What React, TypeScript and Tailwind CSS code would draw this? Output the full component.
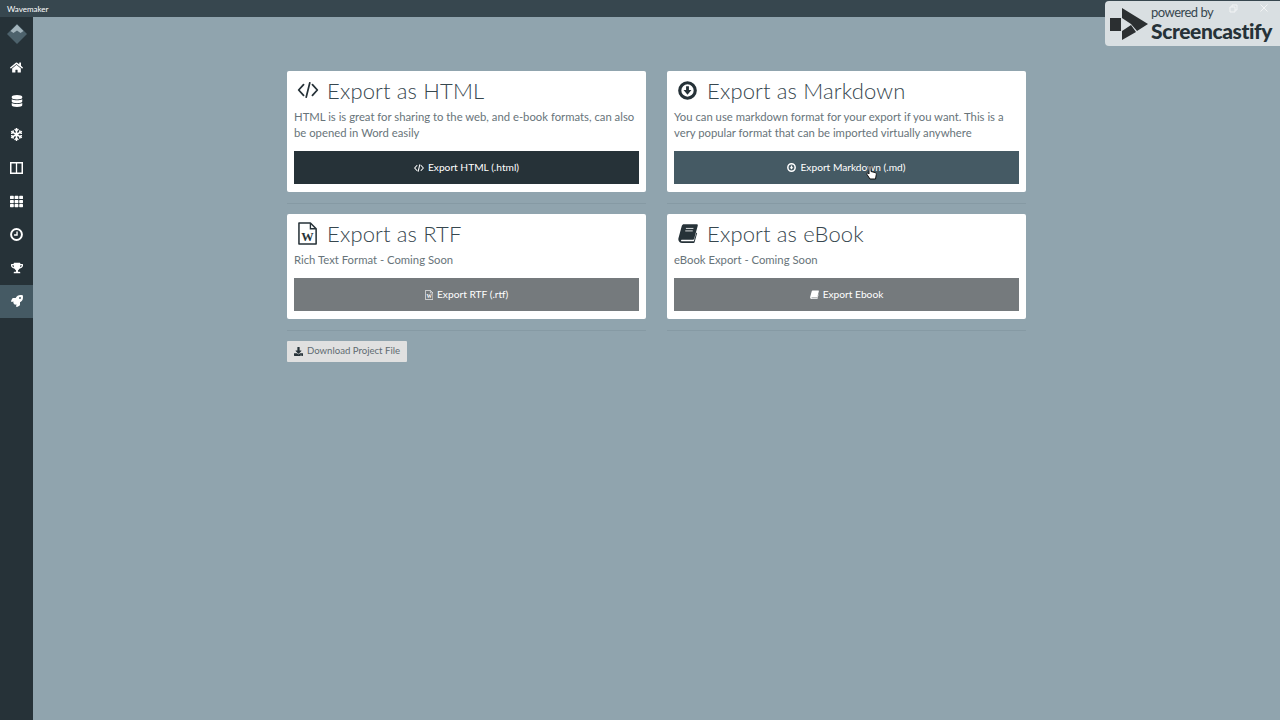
import React from "react";
import { FaHome, FaDatabase, FaSnowflake, FaTh, FaTrophy, FaRocket, FaDownload } from "react-icons/fa";

const F = "font-['Lato','Liberation_Sans',sans-serif]";

function CircleDown({ size }: { size: number }) {
  return (
    <svg width={size} height={size} viewBox="0 0 24 24" fill="none">
      <circle cx="12" cy="12" r="9.8" stroke="currentColor" strokeWidth="4" />
      <path d="M10.200 6.500h3.600v5h3.200L12 17.500 7 11.500h3.200z" fill="currentColor" />
    </svg>
  );
}

function Code({ w, h, sw }: { w: number; h: number; sw: number }) {
  return (
    <svg width={w} height={h} viewBox="0 0 24 18" fill="none" stroke="currentColor" strokeWidth={sw} strokeLinecap="round" strokeLinejoin="round">
      <path d="M7 3 1.500 9 7 15" />
      <path d="M17 3 22.500 9 17 15" />
      <path d="M14 1 10 17" />
    </svg>
  );
}

function FileWord({ size, ink = "currentColor" }: { size: number; ink?: string }) {
  return (
    <svg width={size * 0.83} height={size} viewBox="0 0 20 24" fill="none">
      <path d="M1 1h12l6 6v16H1z" stroke="currentColor" strokeWidth="1.600" strokeLinejoin="round" />
      <path d="M13 1v6h6" stroke="currentColor" strokeWidth="1.400" />
      <text x="10" y="20" textAnchor="middle" fontSize="13" fontWeight="700" fontFamily="'Liberation Serif', serif" fill={ink}>W</text>
    </svg>
  );
}

function Book({ size }: { size: number }) {
  return (
    <svg width={size} height={size} viewBox="0 0 24 24">
      <path d="M7 1.500h15.500c1 0 1.500.8 1.200 1.800L19.500 18.500c-.3 1-1 1.500-2 1.500H5c-1.200 0-1.600.8-1.400 1.200.2.600.8.800 1.400.800h14l3-10.500.9.700-3 11c-.2.600-.6.800-1.200.800H5c-2.500 0-4.600-2-4.600-4.300 0-.6 0-1.200.2-1.800L4.600 3.400C5 2.200 5.900 1.500 7 1.500z" fill="currentColor" />
      <path d="M9.500 6.500h9M8.700 9.500h9" stroke="#fff" strokeWidth="1" />
    </svg>
  );
}

function Clock() {
  return (
    <svg width="13" height="13" viewBox="0 0 24 24" fill="none">
      <circle cx="12" cy="12" r="10" stroke="currentColor" strokeWidth="3.600" />
      <path d="M13 6.500V13H7.500" stroke="currentColor" strokeWidth="2.600" />
    </svg>
  );
}

function Columns() {
  return (
    <svg width="13" height="12" viewBox="0 0 13 12" fill="none" stroke="currentColor">
      <rect x="0.75" y="0.75" width="11.5" height="10.5" strokeWidth="1.500" />
      <path d="M6.500 1v10" strokeWidth="1.300" />
    </svg>
  );
}

function Logo() {
  return (
    <svg width="20" height="22" viewBox="0 0 20 22">
      <path d="M10 1 20 11 10 21 0 11z" fill="#4d626c" />
      <path d="M10 1.500 16.500 8 13.500 10 10 7.500 6.500 10 3.500 8z" fill="#a3b4bc" />
    </svg>
  );
}

function Card({ icon, title, desc, btnIcon, btn, btnClass, tall }: { icon: React.ReactNode; title: string; desc: React.ReactNode; btnIcon: React.ReactNode; btn: string; btnClass: string; tall?: boolean }) {
  return (
    <div>
      <div className={`bg-white rounded-[2px] px-[7px] pt-[2px] ${tall ? "h-[121px]" : "h-[105px]"} flex flex-col`}>
        <div className="flex items-center h-[34px] text-[#263238]">
          <span className="w-[27px] flex justify-center shrink-0">{icon}</span>
          <span className="ml-[6px] text-[22px] font-light tracking-[0.15px] text-[#37474f]">{title}</span>
        </div>
        <p className={`text-[11.3px] leading-[16px] text-[#68747a] mt-[2px] ${tall ? "h-[32px]" : "h-[16px]"}`}>{desc}</p>
        <button className={`mt-[10px] h-[33px] w-full flex items-center justify-center gap-[4px] text-[10.2px] text-white ${btnClass}`}>
          {btnIcon}
          <span>{btn}</span>
        </button>
      </div>
      <hr className="mt-[11px] mb-[10px] border-0 h-px bg-[#869aa4]" />
    </div>
  );
}

export default function App() {
  const nav = [
    <FaHome size={13} />, <FaDatabase size={12} />, <FaSnowflake size={13} />, <Columns />,
    <FaTh size={13} />, <Clock />, <FaTrophy size={12} />, <FaRocket size={12} />,
  ];
  return (
    <div className={`relative h-[720px] w-[1280px] overflow-hidden flex flex-col bg-[#90a4ae] ${F}`}>
      <div className="h-[17px] shrink-0 bg-[#37474f] flex items-center px-[7px] text-[8px] text-white">Wavemaker</div>
      <div className="flex flex-1">
        <div className="w-[33px] bg-[#263238] flex flex-col items-center text-white">
          <div className="h-[34px] w-full flex items-center justify-center"><Logo /></div>
          {nav.map((n, i) => (
            <div key={i} className={`h-[33.4px] w-full flex items-center justify-center ${i === 7 ? "bg-[#455a64]" : ""}`}>{n}</div>
          ))}
        </div>
        <div className="pl-[254px] pt-[54px]">
          <div className="grid grid-cols-[359px_359px] gap-x-[21px] w-[739px]">
            <Card tall icon={<Code w={22} h={16} sw={2} />} title="Export as HTML" desc="HTML is is great for sharing to the web, and e-book formats, can also be opened in Word easily" btnIcon={<Code w={10} h={8} sw={2.500} />} btn="Export HTML (.html)" btnClass="bg-[#263238]" />
            <Card tall icon={<CircleDown size={19} />} title="Export as Markdown" desc="You can use markdown format for your export if you want. This is a very popular format that can be imported virtually anywhere" btnIcon={<CircleDown size={9} />} btn="Export Markdown (.md)" btnClass="bg-[#455a64]" />
            <Card icon={<FileWord size={23} />} title="Export as RTF" desc="Rich Text Format - Coming Soon" btnIcon={<FileWord size={10} />} btn="Export RTF (.rtf)" btnClass="bg-[#757a7d]" />
            <Card icon={<Book size={20} />} title="Export as eBook" desc="eBook Export - Coming Soon" btnIcon={<Book size={9} />} btn="Export Ebook" btnClass="bg-[#757a7d]" />
          </div>
          <button className="h-[21px] w-[120px] bg-[#e0e0e0] text-[#5f6b71] text-[9.6px] flex items-center justify-center gap-[4px] rounded-[1px]">
            <FaDownload size={9} className="text-[#263238]" />
            <span>Download Project File</span>
          </button>
        </div>
      </div>
      <div className="absolute right-0 top-[1px] w-[175px] h-[45px] rounded-l-[4px] bg-[#d9dfe2] flex items-start pl-[5px] pt-[4px]">
        <svg width="38" height="32" viewBox="0 0 38 32" className="shrink-0 mt-[3px]">
          <path d="M0 10h11v13H0z" fill="#2b2f31" />
          <path d="M12 0 38 16 27 23 21 16 12 10zM12 23l9-6 5 7-14 8z" fill="#2b2f31" />
        </svg>
        <div className="ml-[3px] flex flex-col gap-[1px]">
          <span className="text-[13px] leading-[14px] text-[#37474f] tracking-[-0.5px]">powered by</span>
          <span className="text-[21px] leading-[22px] font-black tracking-[-0.4px] text-[#263238]">Screencastify</span>
        </div>
        <svg className="absolute left-[124px] top-[3px]" width="9" height="9" viewBox="0 0 9 9" fill="none" stroke="#f2f4f5">
          <path d="M1 3h5v5H1zM3 3V1h5v5H6" />
        </svg>
        <svg className="absolute left-[155px] top-[3px]" width="8" height="8" viewBox="0 0 8 8" fill="none" stroke="#f2f4f5">
          <path d="M.5.5l7 7M7.500.5l-7 7" />
        </svg>
      </div>
      <svg className="absolute left-[866px] top-[165px]" width="11" height="16" viewBox="0 0 11 16">
        <path d="M3 1.500c0-1 2-1 2 0v5l4 1c1 .3 1.500 1 1.300 2L9.500 14H4L1 9.500c-.6-1 .6-2 1.500-1L3 9z" fill="#fff" stroke="#111" strokeWidth="1" />
      </svg>
    </div>
  );
}
